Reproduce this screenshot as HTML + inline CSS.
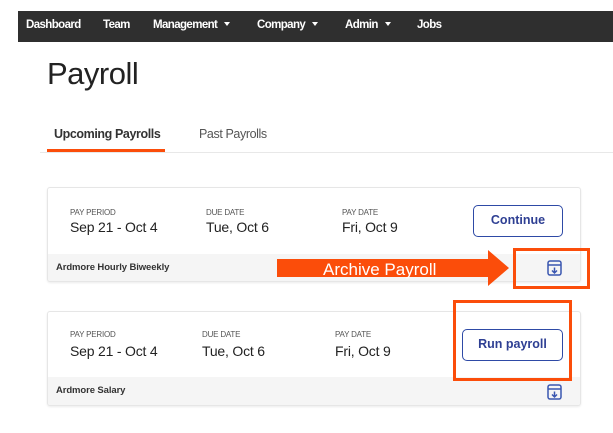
<!DOCTYPE html>
<html><head><style>
*{margin:0;padding:0;box-sizing:border-box}
body{width:613px;height:433px;background:#fff;font-family:"Liberation Sans",sans-serif;position:relative;overflow:hidden;color:#222}
.nav{position:absolute;left:18px;top:11px;width:595px;height:31px;background:#2f2f2f;color:#fff;font-size:11.5px;font-weight:bold}
.nav span{position:absolute;top:8px;letter-spacing:-0.6px}
.caret{display:inline-block;width:0;height:0;border-left:3.5px solid transparent;border-right:3.5px solid transparent;border-top:4px solid #fff;margin-left:7px;vertical-align:2px}
h1{position:absolute;left:47px;top:56px;font-size:31px;font-weight:normal;color:#222;letter-spacing:-0.5px}
.tab{position:absolute;top:127px;font-size:12.5px;letter-spacing:-0.4px}
.card{position:absolute;left:47px;width:534px;height:95px;border:1px solid #e6e6e6;border-radius:3px;background:#fff;box-shadow:0 1px 2px rgba(0,0,0,.08);overflow:hidden}
.foot{position:absolute;left:0;right:0;bottom:0;height:27px;background:#f5f5f5}
.foot span{position:absolute;left:8px;top:8px;font-size:9.5px;color:#333;font-weight:bold;letter-spacing:-0.1px}
.lab{position:absolute;font-size:8px;color:#555;letter-spacing:-0.2px}
.val{position:absolute;font-size:14px;color:#222;letter-spacing:-0.2px}
.btn{position:absolute;border:1.5px solid #2e4aa6;border-radius:5px;color:#2e3f93;font-weight:bold;font-size:12.5px;text-align:center;background:#fff}
.ico{position:absolute}
.box{position:absolute;border:3px solid #fb4d0a}
</style></head><body>
<div class="nav">
<span style="left:8px">Dashboard</span>
<span style="left:85px">Team</span>
<span style="left:135px">Management<i class="caret"></i></span>
<span style="left:239px">Company<i class="caret"></i></span>
<span style="left:327px">Admin<i class="caret"></i></span>
<span style="left:399px">Jobs</span>
</div>
<h1>Payroll</h1>
<div class="tab" style="left:54px;font-weight:bold;color:#333">Upcoming Payrolls</div>
<div class="tab" style="left:199px;color:#555">Past Payrolls</div>
<div style="position:absolute;left:40px;top:152px;width:573px;height:1px;background:#e8e8e8"></div>
<div style="position:absolute;left:47px;top:149px;width:118px;height:3px;background:#fb4d0a"></div>

<div class="card" style="top:187px">
<div class="lab" style="left:22px;top:20px">PAY PERIOD</div><div class="val" style="left:22px;top:31px">Sep 21 - Oct 4</div>
<div class="lab" style="left:158px;top:20px">DUE DATE</div><div class="val" style="left:158px;top:31px">Tue, Oct 6</div>
<div class="lab" style="left:294px;top:20px">PAY DATE</div><div class="val" style="left:294px;top:31px">Fri, Oct 9</div>
<div class="foot"><span>Ardmore Hourly Biweekly</span></div>
</div>
<div class="btn" style="left:473px;top:205px;width:90px;height:32px;line-height:29px">Continue</div>
<svg class="ico" style="left:547px;top:260px" width="15" height="16" viewBox="0 0 15 16" fill="none" stroke="#3a56b0" stroke-width="1.5"><rect x="1" y="1" width="13" height="14" rx="2"/><path d="M1 5h13M7.5 7.5v5M5 10.5l2.5 2.5 2.5-2.5"/></svg>

<div class="card" style="top:311px">
<div class="lab" style="left:22px;top:18px">PAY PERIOD</div><div class="val" style="left:22px;top:31px">Sep 21 - Oct 4</div>
<div class="lab" style="left:154px;top:18px">DUE DATE</div><div class="val" style="left:154px;top:31px">Tue, Oct 6</div>
<div class="lab" style="left:287px;top:18px">PAY DATE</div><div class="val" style="left:287px;top:31px">Fri, Oct 9</div>
<div class="foot" style="height:28px"><span>Ardmore Salary</span></div>
</div>
<div class="btn" style="left:462px;top:329px;width:101px;height:32px;line-height:29px">Run payroll</div>
<svg class="ico" style="left:547px;top:384px" width="15" height="16" viewBox="0 0 15 16" fill="none" stroke="#3a56b0" stroke-width="1.5"><rect x="1" y="1" width="13" height="14" rx="2"/><path d="M1 5h13M7.5 7.5v5M5 10.5l2.5 2.5 2.5-2.5"/></svg>

<svg style="position:absolute;left:277px;top:250px" width="233" height="37"><polygon points="0,9 211,9 211,0 232,18 211,36 211,27 0,27" fill="#fb4d0a"/>
<text x="46" y="25" fill="#fff" font-family="Liberation Sans" font-size="17">Archive Payroll</text></svg>
<div class="box" style="left:513px;top:248px;width:77px;height:41px"></div>
<div class="box" style="left:453px;top:300px;width:119px;height:81px"></div>
</body></html>
